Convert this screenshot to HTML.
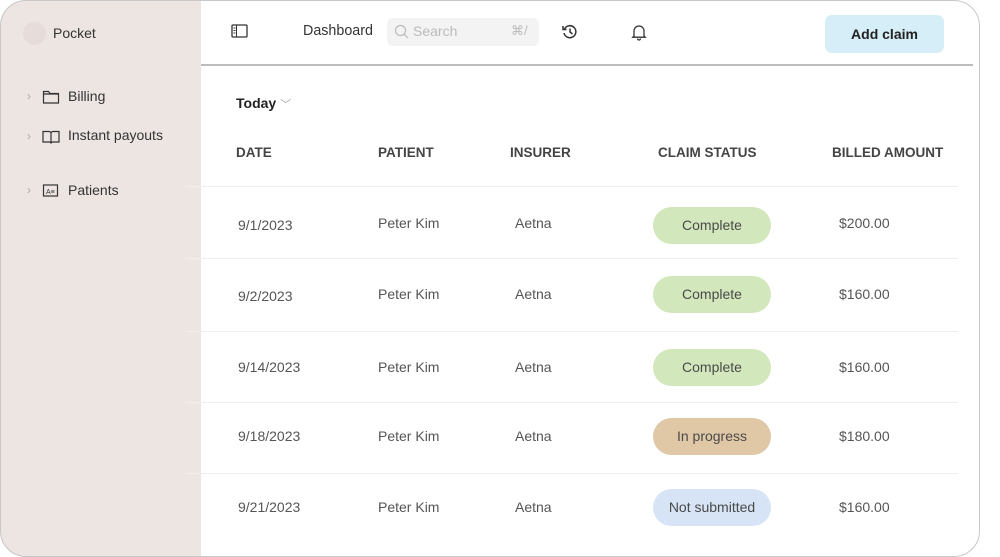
<!DOCTYPE html>
<html style="overflow:hidden"><head><style>
*{margin:0;padding:0;box-sizing:border-box}
html,body{width:1000px;height:557px;overflow:hidden}
body{background:#fff;font-family:"Liberation Sans",sans-serif;position:relative;color:#222}
.frame{position:absolute;left:0;top:0;width:980px;height:557px;border-radius:26px;overflow:hidden;background:#fff}
.bord{position:absolute;left:0;top:0;width:980px;height:557px;border:1px solid #c8c8c8;border-radius:26px;pointer-events:none}
.side{position:absolute;left:0;top:0;width:201px;height:557px;background:#ede5e2}
.a{position:absolute;white-space:nowrap}
.hline{position:absolute;left:186px;width:772px;height:1px;background:#f0eeee}
.pill{position:absolute;left:653px;width:118px;height:37px;border-radius:19px;font-size:14px;color:#4a4a4a;text-align:center;line-height:37px}
.cell{position:absolute;font-size:14px;color:#555}
.hd{position:absolute;top:145px;font-size:13.5px;font-weight:bold;color:#444}
</style></head><body>
<div class="frame">
<div class="side"></div>
<div class="a" style="left:23px;top:22px;width:23px;height:23px;border-radius:50%;background:#e6dcd9"></div>
<div class="a" style="left:53px;top:25px;font-size:14px;color:#333">Pocket</div>

<div class="a" style="left:27px;top:89px;font-size:12px;color:#aaa">›</div>
<svg class="a" style="left:42px;top:89px" width="18" height="16" viewBox="0 0 18 16"><path d="M1.5 2.5h5l1.5 2h8.5v9.5h-15z M1.5 5h15" fill="none" stroke="#333" stroke-width="1.2"/></svg>
<div class="a" style="left:68px;top:88px;font-size:14px;color:#333">Billing</div>
<div class="a" style="left:27px;top:129px;font-size:12px;color:#aaa">›</div>
<svg class="a" style="left:42px;top:129px" width="18" height="16" viewBox="0 0 18 16"><path d="M1 2.5h6c1 0 2 .8 2 2v10c0-1-1-1.5-2-1.5H1z M17 2.5h-6c-1 0-2 .8-2 2v10c0-1 1-1.5 2-1.5h6z" fill="none" stroke="#333" stroke-width="1.2"/></svg>
<div class="a" style="left:68px;top:127px;font-size:14px;color:#333">Instant payouts</div>
<div class="a" style="left:27px;top:183px;font-size:12px;color:#aaa">›</div>
<svg class="a" style="left:42px;top:183px" width="18" height="16" viewBox="0 0 18 16"><rect x="1.5" y="2" width="14" height="11" fill="none" stroke="#333" stroke-width="1.2"/><text x="4" y="11" font-size="7" font-family="Liberation Sans" fill="#333">A≡</text></svg>
<div class="a" style="left:68px;top:182px;font-size:14px;color:#333">Patients</div>

<svg class="a" style="left:231px;top:24px" width="18" height="15" viewBox="0 0 18 15"><rect x="1" y="1" width="15" height="12" rx="1" fill="none" stroke="#333" stroke-width="1.3"/><path d="M5.5 1v12M2.5 4h2M2.5 6.5h2M2.5 9h2" stroke="#333" stroke-width="1"/></svg>
<div class="a" style="left:303px;top:23px;font-size:14.3px;color:#333">Dashboard</div>
<div class="a" style="left:387px;top:18px;width:152px;height:28px;border-radius:6px;background:#f3f3f3"></div>
<svg class="a" style="left:394px;top:24px" width="15" height="15" viewBox="0 0 15 15"><circle cx="6.5" cy="6.5" r="5" fill="none" stroke="#bbb" stroke-width="1.2"/><path d="M10 10l4 4" stroke="#bbb" stroke-width="1.2"/></svg>
<div class="a" style="left:413px;top:23px;font-size:14px;color:#bbb">Search</div>
<div class="a" style="left:511px;top:23px;font-size:13px;color:#bbb">⌘/</div>
<svg class="a" style="left:561px;top:23px" width="18" height="18" viewBox="0 0 18 18"><path d="M3.5 6A6 6 0 1 1 3 10" fill="none" stroke="#333" stroke-width="1.5"/><path d="M2 3v3.5h3.5" fill="none" stroke="#333" stroke-width="1.5"/><path d="M9 5.5V9l2.5 2" fill="none" stroke="#333" stroke-width="1.5"/></svg>
<svg class="a" style="left:630px;top:23px" width="18" height="18" viewBox="0 0 18 18"><path d="M4 13V8a5 5 0 0 1 10 0v5l1.2 1.2H2.8z M7.5 15.5a1.5 1.5 0 0 0 3 0" fill="none" stroke="#333" stroke-width="1.3"/></svg>
<div class="a" style="left:825px;top:15px;width:119px;height:38px;border-radius:7px;background:#d6eef7;font-size:14px;font-weight:bold;color:#222;text-align:center;line-height:38px">Add claim</div>
<div class="a" style="left:201px;top:64px;width:772px;height:2px;background:#bdbdbd"></div>

<div class="a" style="left:236px;top:95px;font-size:14px;font-weight:bold;color:#222">Today <span style="font-weight:normal;color:#aaa;font-size:11px">﹀</span></div>
<div class="hd" style="left:236px">DATE</div>
<div class="hd" style="left:378px">PATIENT</div>
<div class="hd" style="left:510px">INSURER</div>
<div class="hd" style="left:658px">CLAIM STATUS</div>
<div class="hd" style="left:832px">BILLED AMOUNT</div>

<div class="hline" style="top:186px"></div>
<div class="hline" style="top:258px"></div>
<div class="hline" style="top:331px"></div>
<div class="hline" style="top:402px"></div>
<div class="hline" style="top:473px"></div>

<div class="cell" style="left:238px;top:217px">9/1/2023</div><div class="cell" style="left:378px;top:215px">Peter Kim</div><div class="cell" style="left:515px;top:215px">Aetna</div><div class="pill" style="top:207px;background:#d3e7bc">Complete</div><div class="cell" style="left:839px;top:215px">$200.00</div>
<div class="cell" style="left:238px;top:288px">9/2/2023</div><div class="cell" style="left:378px;top:286px">Peter Kim</div><div class="cell" style="left:515px;top:286px">Aetna</div><div class="pill" style="top:276px;background:#d3e7bc">Complete</div><div class="cell" style="left:839px;top:286px">$160.00</div>
<div class="cell" style="left:238px;top:359px">9/14/2023</div><div class="cell" style="left:378px;top:359px">Peter Kim</div><div class="cell" style="left:515px;top:359px">Aetna</div><div class="pill" style="top:349px;background:#d3e7bc">Complete</div><div class="cell" style="left:839px;top:359px">$160.00</div>
<div class="cell" style="left:238px;top:428px">9/18/2023</div><div class="cell" style="left:378px;top:428px">Peter Kim</div><div class="cell" style="left:515px;top:428px">Aetna</div><div class="pill" style="top:418px;background:#e0c8a6">In progress</div><div class="cell" style="left:839px;top:428px">$180.00</div>
<div class="cell" style="left:238px;top:499px">9/21/2023</div><div class="cell" style="left:378px;top:499px">Peter Kim</div><div class="cell" style="left:515px;top:499px">Aetna</div><div class="pill" style="top:489px;background:#d6e4f5">Not submitted</div><div class="cell" style="left:839px;top:499px">$160.00</div>
</div>
<div class="bord"></div>
</body></html>
